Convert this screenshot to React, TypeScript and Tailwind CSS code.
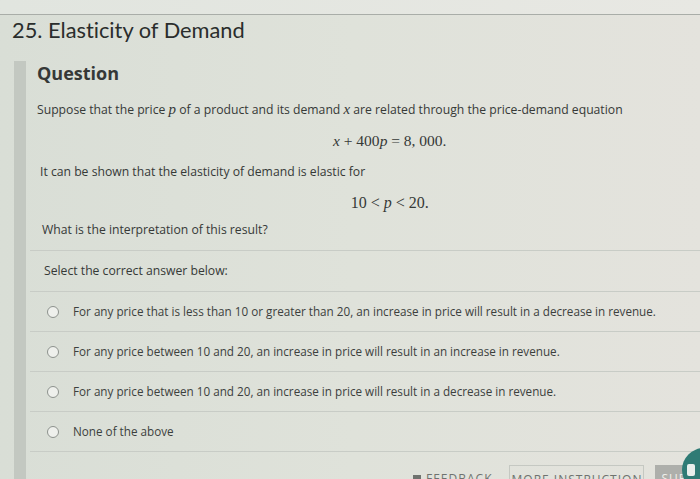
import React from 'react';

const options = [
    'For any price that is less than 10 or greater than 20, an increase in price will result in a decrease in revenue.',
    'For any price between 10 and 20, an increase in price will result in an increase in revenue.',
    'For any price between 10 and 20, an increase in price will result in a decrease in revenue.',
    'None of the above',
];

const App: React.FC = () => {
    return (
        <div className="relative w-[700px] h-[479px] overflow-hidden bg-gradient-to-r from-[#d9ded6] via-[#dfe2da] to-[#e4e3dd] text-[#363937] font-['Open_Sans',sans-serif]">
            <div className="h-[15px] bg-gradient-to-r from-[#e1e5df] to-[#e8e8e3] border-b border-[#a9ada8]" />

            {/* Title */}
            <h1 className="pt-[2px] pl-[12px] leading-[26px] text-[21.8px] text-[#2a2d2c] font-['Lato',sans-serif] [font-variant-ligatures:none]">
                25. Elasticity of Demand
            </h1>

            <div className="mt-[18px] flex">
                <div className="ml-[14px] w-[12px] h-[420px] shrink-0 bg-[#c3c8c1]" />

                <div className="ml-[4px] flex-1">
                    <h2 className="pl-[7px] leading-[24px] text-[18px] font-bold text-[#353837]">Question</h2>

                    <p className="mt-[14px] pl-[7px] leading-[20px] text-[12.2px] font-medium">
                        Suppose that the price <i className="font-['Liberation_Serif',serif] text-[15px]">p</i> of a product and its demand <i className="font-['Liberation_Serif',serif] text-[15px]">x</i> are related through the price-demand equation
                    </p>
                    <p className="mt-[11px] pl-[34px] leading-[20px] text-center text-[15.5px] font-['Liberation_Serif',serif]">
                        <i>x</i> + 400<i>p</i> = 8, 000.
                    </p>
                    <p className="mt-[11px] pl-[10px] leading-[20px] text-[12.2px] font-medium">
                        It can be shown that the elasticity of demand is elastic for
                    </p>
                    <p className="mt-[11px] pl-[34px] leading-[20px] text-center text-[16px] font-['Liberation_Serif',serif]">
                        10 &lt; <i>p</i> &lt; 20.
                    </p>
                    <p className="mt-[7px] pl-[12px] pb-[10px] leading-[20px] text-[12.2px] font-medium border-b border-[#c8ccc6]">
                        What is the interpretation of this result?
                    </p>

                    <div className="h-[41px] flex items-center pl-[14px] text-[12.2px] font-medium border-b border-[#c8ccc6]">
                        Select the correct answer below:
                    </div>

                    {options.map((o, i) => (
                        <div key={i} className="h-[40px] flex items-center gap-[14px] pl-[17px] border-b border-[#c8ccc6]">
                            <span className="w-[12px] h-[12px] rounded-full border-[1.5px] border-[#8d928d] bg-[#eef0ec] shrink-0" />
                            <span className="text-[11.7px] font-medium text-[#3c3f3d]">{o}</span>
                        </div>
                    ))}

                    {/* Footer buttons */}
                    <div className="mt-[13px] flex items-start">
                        <div className="ml-[383px] pt-[5px] flex items-center gap-[5px] text-[12px] tracking-[1px] text-[#6f736f]">
                            <span className="w-[8px] h-[8px] bg-[#6f736f]" />
                            FEEDBACK
                        </div>
                        <div className="ml-[17px] w-[135px] h-[30px] pt-[5px] text-center border border-[#c5c8c2] text-[12px] tracking-[1px] text-[#6f736f]">
                            MORE INSTRUCTION
                        </div>
                        <div className="ml-[11px] w-[60px] h-[30px] pt-[5px] pl-[6px] bg-[#aeafab] text-[12px] tracking-[1px] text-[#eeeeea]">
                            SUBMIT
                        </div>
                    </div>
                </div>
            </div>

            {/* Help bubble */}
            <div className="absolute left-[682px] top-[448px] w-[44px] h-[44px] rounded-full bg-[#2f7b75] flex items-center pl-[5px]">
                <span className="w-[8px] h-[12px] rounded-[2px] bg-[#e8efec]" />
            </div>
        </div>
    );
};

export default App;
